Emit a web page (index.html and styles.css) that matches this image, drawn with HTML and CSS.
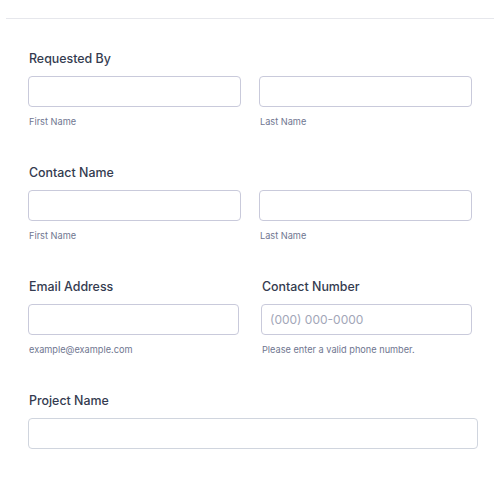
FILE: index.html
```html
<!DOCTYPE html>
<html>
<head>
<meta charset="utf-8">
<link rel="stylesheet" href="styles.css">
</head>
<body>
<div class="divider"></div>
<form class="form">
  <div class="field">
    <div class="label">Requested By</div>
    <div class="row row-name">
      <div class="col"><div class="input"></div><div class="sub">First Name</div></div>
      <div class="col"><div class="input"></div><div class="sub">Last Name</div></div>
    </div>
  </div>
  <div class="field">
    <div class="label">Contact Name</div>
    <div class="row row-name">
      <div class="col"><div class="input"></div><div class="sub">First Name</div></div>
      <div class="col"><div class="input"></div><div class="sub">Last Name</div></div>
    </div>
  </div>
  <div class="field">
    <div class="row row-contact">
      <div class="col">
        <div class="label">Email Address</div>
        <div class="input"></div>
        <div class="sub">example@example.com</div>
      </div>
      <div class="col">
        <div class="label">Contact Number</div>
        <div class="input"><span class="ph">(000) 000-0000</span></div>
        <div class="sub">Please enter a valid phone number.</div>
      </div>
    </div>
  </div>
  <div class="field">
    <div class="label">Project Name</div>
    <div class="input wide"></div>
  </div>
</form>
</body>
</html>
```
FILE: styles.css
```css
* { box-sizing: border-box; }
body {
  margin: 0;
  background: #fff;
  font-family: Inter, "Noto Sans", sans-serif;
  color: #2c3345;
}
.divider {
  margin: 18px 6px 0;
  height: 1px;
  background: #e6e7ec;
}
.form {
  display: block;
  padding: 32px 0 0 28px;
}
.field {
  margin-bottom: 36px;
}
.label {
  font-size: 12.4px;
  line-height: 16px;
  font-weight: 500;
  padding-left: 1px;
  margin-bottom: 9px;
  color: #343b4f;
}
.row {
  display: grid;
}
.row-name {
  grid-template-columns: 213px 213px;
  column-gap: 18px;
}
.row-contact {
  grid-template-columns: 211px 211px;
  column-gap: 22px;
}
.input {
  height: 31px;
  border: 1px solid #c9cadb;
  border-radius: 4px;
  background: #fff;
  display: flex;
  align-items: center;
  padding-left: 8px;
}
.input.wide {
  width: 450px;
  border-color: #d0d5de;
}
.ph {
  font-size: 12px;
  color: #a2a6b8;
}
.sub {
  margin-top: 8px;
  font-size: 9.2px;
  line-height: 14px;
  color: #6f7690;
  padding-left: 1px;
}
```
